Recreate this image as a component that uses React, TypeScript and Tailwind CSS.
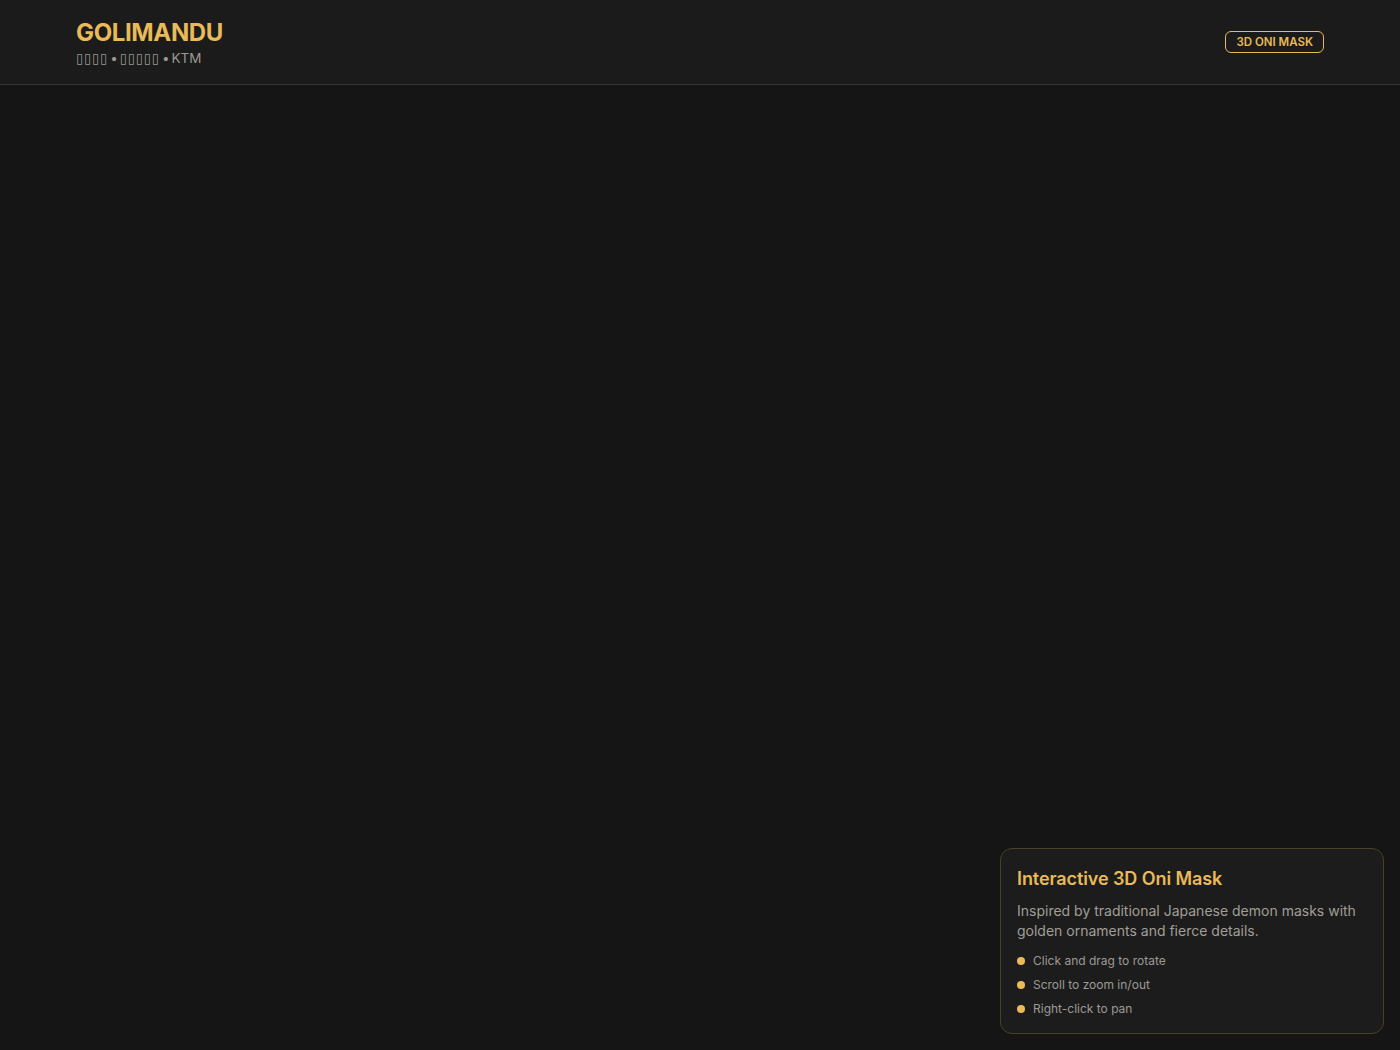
import React from "react";

const tips = ["Click and drag to rotate", "Scroll to zoom in/out", "Right-click to pan"];

function Dot() {
  return <span className="px-[2px]">•</span>;
}

export default function App() {
  return (
    <div
      className="flex h-screen w-full flex-col bg-[#151515] text-[#9c9a95]"
      style={{ fontFamily: "Inter, 'Noto Sans', sans-serif" }}
    >
      <header className="flex h-[85px] shrink-0 items-center justify-between border-b border-[#333333] bg-[#1b1b1b] px-[76px]">
        <div className="flex flex-col pt-[3px]">
          <h1 className="text-[24px] font-bold leading-[28px] tracking-[-0.015em] text-[#e9ba58]">GOLIMANDU</h1>
          <p className="mt-[1px] flex items-center text-[13.5px] leading-[20px] text-[#9a9893]">
            <span style={{ fontFamily: "'DejaVu Sans', sans-serif" }} className="text-[13.5px] tracking-[0.6px]">▯▯▯▯</span>
            <Dot />
            <span style={{ fontFamily: "'DejaVu Sans', sans-serif" }} className="text-[13.5px] tracking-[0.6px]">▯▯▯▯▯</span>
            <Dot />
            <span>KTM</span>
          </p>
        </div>
        <span className="rounded-md border border-[#e9ba58] px-[10px] py-[3px] text-[11.5px] font-semibold leading-[14px] text-[#e9ba58]">
          3D ONI MASK
        </span>
      </header>
      <main className="relative flex-1">
        <div className="absolute bottom-4 right-4 w-[384px] rounded-xl border border-[#4a3f28] bg-[#1c1c1c] px-4 pb-4 pt-[18px]">
          <h2 className="text-[18px] font-semibold leading-[24px] tracking-[-0.005em] text-[#e9ba58]">Interactive 3D Oni Mask</h2>
          <p className="mt-[10px] text-[14px] leading-[20px] text-[#a19e97]">
            Inspired by traditional Japanese demon masks with golden ornaments and fierce details.
          </p>
          <ul className="mt-[12px] flex flex-col gap-[8px]">
            {tips.map((t) => (
              <li key={t} className="flex items-center gap-2 text-[12px] leading-[16px] text-[#9c9a95]">
                <span className="h-2 w-2 rounded-full bg-[#e9ba58]" />
                {t}
              </li>
            ))}
          </ul>
        </div>
      </main>
    </div>
  );
}
